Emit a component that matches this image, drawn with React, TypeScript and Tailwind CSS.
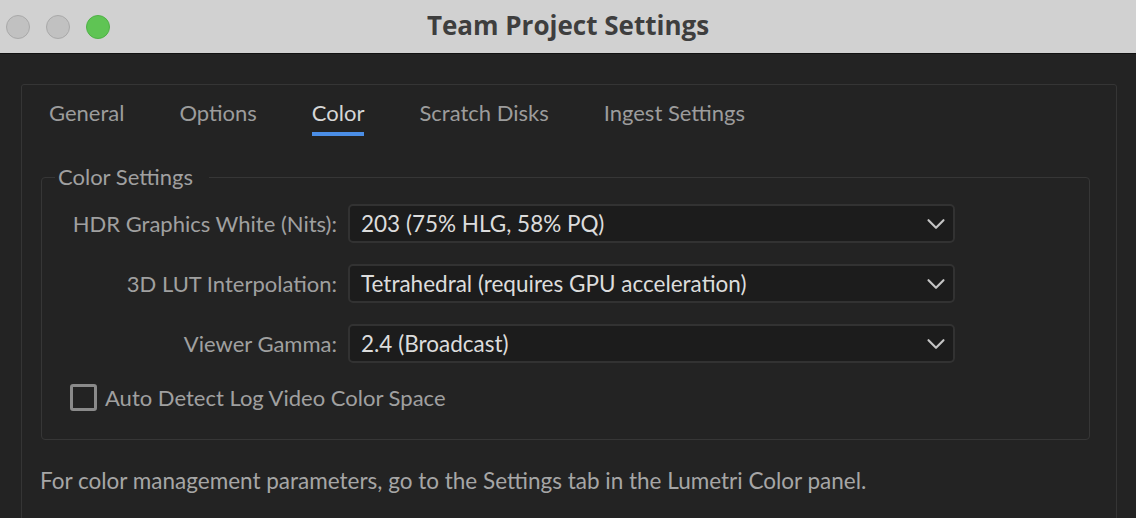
import { ChevronDown } from 'lucide-react'

const tabs = ['General', 'Options', 'Color', 'Scratch Disks', 'Ingest Settings']

const rows = [
  { label: 'HDR Graphics White (Nits):', value: '203 (75% HLG, 58% PQ)' },
  { label: '3D LUT Interpolation:', value: 'Tetrahedral (requires GPU acceleration)' },
  { label: 'Viewer Gamma:', value: '2.4 (Broadcast)' },
]

export default function App() {
  return (
    <div className="h-[518px] w-[1136px] overflow-hidden bg-[#232323] font-['Lato',sans-serif]">
      {/* title bar */}
      <div className="grid h-[54px] grid-cols-[1fr_auto_1fr] items-center border-b border-[#111111] bg-[#d1d1d1]">
        <div className="flex gap-[16px] pl-[6px]">
          <span className="h-[24px] w-[24px] rounded-full border border-[#a9a9a9] bg-[#c1c1c1]" />
          <span className="h-[24px] w-[24px] rounded-full border border-[#a9a9a9] bg-[#c1c1c1]" />
          <span className="h-[24px] w-[24px] rounded-full border border-[#4fb146] bg-[#5fc454]" />
        </div>
        <div className="pb-[4px] font-['Open_Sans',sans-serif] text-[26px] leading-[34px] font-bold text-[#3e3e3e]">
          Team Project Settings
        </div>
        <div />
      </div>

      <div className="pt-[30px] pl-[21px]">
        <div className="h-[600px] w-[1096px] rounded-[3px] border border-[#353535]">
          {/* tabs */}
          <div className="flex gap-[55px] pt-[14px] pl-[27px]">
            {tabs.map((t) => (
              <div key={t} className="flex flex-col">
                <span
                  className={
                    t === 'Color'
                      ? 'text-[22px] leading-[28px] text-[#d6d6d6]'
                      : 'text-[22px] leading-[28px] text-[#9c9c9c]'
                  }
                >
                  {t}
                </span>
                <span
                  className={
                    t === 'Color'
                      ? 'mt-[5px] h-[4px] bg-[#4b8ee6]'
                      : 'mt-[5px] h-[4px]'
                  }
                />
              </div>
            ))}
          </div>

          {/* color settings group */}
          <fieldset className="mt-[27px] ml-[19px] w-[1049px] rounded-[4px] border border-[#363636] pb-[28px]">
            <legend className="ml-[13px] pr-[16px] pl-[3px] text-[22px] leading-[28px] text-[#a0a0a0]">
              Color Settings
            </legend>
            <div className="flex flex-col gap-[21px] pt-[13px]">
              {rows.map((r) => (
                <div key={r.label} className="flex items-center">
                  <div className="w-[295px] text-right text-[22px] text-[#a0a0a0]">{r.label}</div>
                  <div className="ml-[11px] flex h-[39px] w-[607px] items-center justify-between rounded-[5px] border-2 border-[#323232] bg-[#1c1c1c] pr-[2px] pl-[11px]">
                    <span className="text-[22.5px] text-[#dcdcdc]">{r.value}</span>
                    <ChevronDown className="h-[30px] w-[30px] text-[#c4c4c4]" strokeWidth={1.7} />
                  </div>
                </div>
              ))}
              <label className="flex items-center gap-[8px] pl-[28px]">
                <span className="h-[27px] w-[27px] rounded-[3px] border-[3px] border-[#8a8a8a]" />
                <span className="text-[22px] leading-[27px] text-[#a0a0a0]">
                  Auto Detect Log Video Color Space
                </span>
              </label>
            </div>
          </fieldset>

          <p className="mt-[27px] ml-[18px] text-[22.5px] leading-[28px] text-[#a6a6a6]">
            For color management parameters, go to the Settings tab in the Lumetri Color panel.
          </p>
        </div>
      </div>
    </div>
  )
}
